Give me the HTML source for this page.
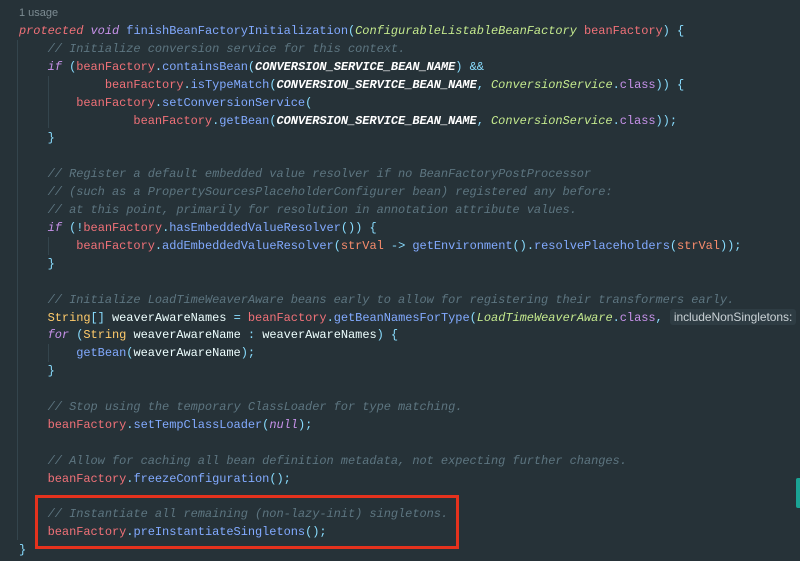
<!DOCTYPE html>
<html><head><meta charset="utf-8"><style>
html,body{margin:0;padding:0;background:#263238;width:800px;height:561px;overflow:hidden;position:relative}
.u{position:absolute;left:19px;top:7px;font:11px "Liberation Sans",sans-serif;color:#7d8c93}
pre{position:absolute;left:19px;top:23px;margin:0;font:12px/17.9px "Liberation Mono",monospace;letter-spacing:-0.05px;color:#eeffff;white-space:pre}
.k{color:#f07178;font-style:italic}
.p{color:#c792ea;font-style:italic}
.m{color:#82aaff}
.b{color:#f78c6c}
.v{color:#f07178}
.c{color:#5d7580;font-style:italic}
.o{color:#89ddff}
.C{color:#ffffff;font-weight:bold;font-style:italic}
.t{color:#c3e88d;font-style:italic}
.s{color:#ffcb6b}
.hint{background:#2e3c43;color:#c9d1d5;font:12px "Liberation Sans",sans-serif;padding:1px 4px;border-radius:3px}
.g{position:absolute;width:1px;background:#34454d}
.box{position:absolute;left:35px;top:495px;width:418px;height:48px;border:3px solid #e5321d}
.sb{position:absolute;left:796px;top:478px;width:4px;height:30px;background:#1aa394;border-radius:2px 0 0 2px}
</style></head><body>
<div class="u">1 usage</div>
<div class="g" style="left:17px;top:40px;height:500px"></div>
<div class="g" style="left:48px;top:76px;height:52px"></div>
<div class="g" style="left:48px;top:237px;height:18px"></div>
<div class="g" style="left:48px;top:344px;height:18px"></div>
<pre><span class="k">protected</span> <span class="p">void</span> <span class="m">finishBeanFactoryInitialization</span><span class="o">(</span><span class="t">ConfigurableListableBeanFactory</span> <span class="v">beanFactory</span><span class="o">) {</span>
    <span class="c">// Initialize conversion service for this context.</span>
    <span class="p">if</span> <span class="o">(</span><span class="v">beanFactory</span><span class="o">.</span><span class="m">containsBean</span><span class="o">(</span><span class="C">CONVERSION_SERVICE_BEAN_NAME</span><span class="o">) &amp;&amp;</span>
            <span class="v">beanFactory</span><span class="o">.</span><span class="m">isTypeMatch</span><span class="o">(</span><span class="C">CONVERSION_SERVICE_BEAN_NAME</span><span class="o">,</span> <span class="t">ConversionService</span><span class="o">.</span><span class="p" style="font-style:normal">class</span><span class="o">)) {</span>
        <span class="v">beanFactory</span><span class="o">.</span><span class="m">setConversionService</span><span class="o">(</span>
                <span class="v">beanFactory</span><span class="o">.</span><span class="m">getBean</span><span class="o">(</span><span class="C">CONVERSION_SERVICE_BEAN_NAME</span><span class="o">,</span> <span class="t">ConversionService</span><span class="o">.</span><span class="p" style="font-style:normal">class</span><span class="o">));</span>
    <span class="o">}</span>

    <span class="c">// Register a default embedded value resolver if no BeanFactoryPostProcessor</span>
    <span class="c">// (such as a PropertySourcesPlaceholderConfigurer bean) registered any before:</span>
    <span class="c">// at this point, primarily for resolution in annotation attribute values.</span>
    <span class="p">if</span> <span class="o">(!</span><span class="v">beanFactory</span><span class="o">.</span><span class="m">hasEmbeddedValueResolver</span><span class="o">()) {</span>
        <span class="v">beanFactory</span><span class="o">.</span><span class="m">addEmbeddedValueResolver</span><span class="o">(</span><span class="b">strVal</span> <span class="o">-&gt;</span> <span class="m">getEnvironment</span><span class="o">().</span><span class="m">resolvePlaceholders</span><span class="o">(</span><span class="b">strVal</span><span class="o">));</span>
    <span class="o">}</span>

    <span class="c">// Initialize LoadTimeWeaverAware beans early to allow for registering their transformers early.</span>
    <span class="s">String</span><span class="o">[]</span> weaverAwareNames <span class="o">=</span> <span class="v">beanFactory</span><span class="o">.</span><span class="m">getBeanNamesForType</span><span class="o">(</span><span class="t">LoadTimeWeaverAware</span><span class="o">.</span><span class="p" style="font-style:normal">class</span><span class="o">,</span> <span class="hint">includeNonSingletons:</span>
    <span class="p">for</span> <span class="o">(</span><span class="s">String</span> weaverAwareName <span class="o">:</span> weaverAwareNames<span class="o">) {</span>
        <span class="m">getBean</span><span class="o">(</span>weaverAwareName<span class="o">);</span>
    <span class="o">}</span>

    <span class="c">// Stop using the temporary ClassLoader for type matching.</span>
    <span class="v">beanFactory</span><span class="o">.</span><span class="m">setTempClassLoader</span><span class="o">(</span><span class="p">null</span><span class="o">);</span>

    <span class="c">// Allow for caching all bean definition metadata, not expecting further changes.</span>
    <span class="v">beanFactory</span><span class="o">.</span><span class="m">freezeConfiguration</span><span class="o">();</span>

    <span class="c">// Instantiate all remaining (non-lazy-init) singletons.</span>
    <span class="v">beanFactory</span><span class="o">.</span><span class="m">preInstantiateSingletons</span><span class="o">();</span>
<span class="o">}</span></pre>
<div class="box"></div>
<div class="sb"></div>
</body></html>
